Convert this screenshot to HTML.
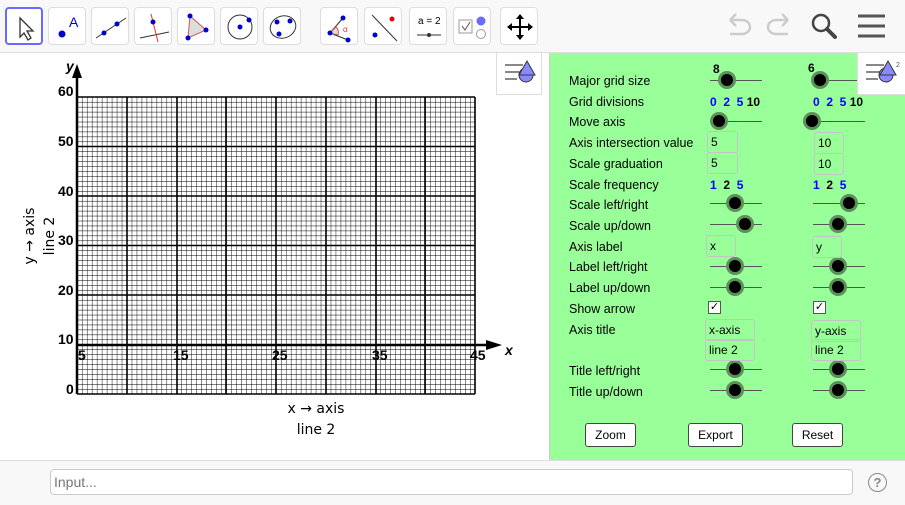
<!DOCTYPE html>
<html><head><style>
*{margin:0;padding:0;box-sizing:border-box}
body{width:905px;height:505px;overflow:hidden;background:#fff;font-family:"Liberation Sans",sans-serif;position:relative}
.tb{position:absolute;left:0;top:0;width:905px;height:53px;background:#f8f8f8;border-bottom:1px solid #ddd}
.btn{position:absolute;top:7px;width:38px;height:38px;background:#fff;border:1px solid #ddd;border-radius:4px}
.btn svg{width:38px;height:38px}
.panel{position:absolute;left:549px;top:53px;width:356px;height:407px;background:#99ff99;border-left:1px solid #ccc}
.l{position:absolute;left:19px;font-size:12.5px;color:#000}
.sl{position:absolute;height:1px;background:#555;width:52px}
.dot{position:absolute;width:18px;height:18px;border-radius:50%;background:#000;border:3px solid #5d8f5d}
.box{position:absolute;border:1.5px solid #c4c4c4;border-radius:3px;font-size:12px;padding:3px 0 0 3px;height:22px}
.cb{position:absolute;width:13px;height:13px;border:1px solid #555;background:#fff;font-size:11px;line-height:11px;text-align:center}
.b{position:absolute;top:370px;height:24px;border:1px solid #444;border-radius:3px;background:#fff;font-size:12px;text-align:center;line-height:22px}
.bottom{position:absolute;left:0;top:460px;width:905px;height:45px;background:#f8f8f8;border-top:1px solid #ddd}
</style></head><body>
<div class="tb">
<div class="btn" style="left:5px;border:2px solid #6a6aff"><svg viewBox="0 0 38 38"><path d="M13 9 L13 28 L17 24 L21 31 L24 29 L20 22 L26 22 Z" fill="#fff" stroke="#333" stroke-width="1.3"/></svg></div>
<div class="btn" style="left:48px"><svg viewBox="0 0 38 38"><circle cx="13" cy="26" r="3.5" fill="#00c"/><text x="20" y="19" fill="#00c" font-size="14" font-family="Liberation Sans">A</text></svg></div>
<div class="btn" style="left:91px"><svg viewBox="0 0 38 38"><line x1="4" y1="30" x2="34" y2="10" stroke="#333"/><circle cx="12" cy="25" r="2.5" fill="#00c"/><circle cx="25" cy="16" r="2.5" fill="#00c"/></svg></div>
<div class="btn" style="left:134px"><svg viewBox="0 0 38 38"><line x1="5" y1="30" x2="34" y2="24" stroke="#333"/><line x1="16" y1="6" x2="23" y2="34" stroke="#e33"/><circle cx="18" cy="14" r="2.5" fill="#00c"/></svg></div>
<div class="btn" style="left:177px"><svg viewBox="0 0 38 38"><path d="M12 8 L28 22 L10 30 Z" fill="#ddd" stroke="#c55"/><circle cx="12" cy="8" r="2.5" fill="#00c"/><circle cx="28" cy="22" r="2.5" fill="#00c"/><circle cx="10" cy="30" r="2.5" fill="#00c"/></svg></div>
<div class="btn" style="left:220px"><svg viewBox="0 0 38 38"><circle cx="19" cy="19" r="12" fill="none" stroke="#333"/><circle cx="19" cy="19" r="2.5" fill="#00c"/><circle cx="28" cy="12" r="2.5" fill="#00c"/></svg></div>
<div class="btn" style="left:263px"><svg viewBox="0 0 38 38"><ellipse cx="19" cy="19" rx="13" ry="11" fill="none" stroke="#333" transform="rotate(-20 19 19)"/><circle cx="13" cy="14" r="2.5" fill="#00c"/><circle cx="26" cy="13" r="2.5" fill="#00c"/><circle cx="15" cy="26" r="2.5" fill="#00c"/></svg></div>
<div class="btn" style="left:320px"><svg viewBox="0 0 38 38"><path d="M9 25 L22 10 M9 25 L27 32" stroke="#333"/><path d="M9 25 L15 19 A8 8 0 0 1 17 27 Z" fill="#ddd" stroke="#c55"/><text x="22" y="24" fill="#e33" font-size="8">α</text><circle cx="9" cy="25" r="2.5" fill="#00c"/><circle cx="22" cy="10" r="2.5" fill="#00c"/><circle cx="27" cy="32" r="2.5" fill="#00c"/></svg></div>
<div class="btn" style="left:364px"><svg viewBox="0 0 38 38"><line x1="7" y1="7" x2="32" y2="33" stroke="#333"/><circle cx="27" cy="11" r="2.5" fill="#e00"/><circle cx="10" cy="27" r="2.5" fill="#00c"/></svg></div>
<div class="btn" style="left:409px"><svg viewBox="0 0 38 38"><text x="8" y="16" font-size="10" fill="#000">a = 2</text><line x1="7" y1="27" x2="31" y2="27" stroke="#333"/><circle cx="19" cy="27" r="2" fill="#333"/></svg></div>
<div class="btn" style="left:453px"><svg viewBox="0 0 38 38"><rect x="5" y="12" width="13" height="13" fill="#fff" stroke="#999"/><path d="M8 18 L11 22 L16 14" fill="none" stroke="#555"/><circle cx="27" cy="13" r="4.5" fill="#6a6aff"/><circle cx="27" cy="26" r="4.5" fill="#fff" stroke="#999"/></svg></div>
<div class="btn" style="left:500px"><svg viewBox="0 0 38 38"><path d="M19 8 V30 M8 19 H30" stroke="#000" stroke-width="2"/><path d="M19 6 L15 11 H23Z M19 32 L15 27 H23Z M6 19 L11 15 V23Z M32 19 L27 15 V23Z" fill="#000"/></svg></div>
<svg style="position:absolute;left:722px;top:10px" width="180" height="34" viewBox="0 0 180 34"><path d="M8 10 H20 A8 7 0 0 1 20 24 H8 M8 10 L14 4 M8 10 L14 16" fill="none" stroke="#ccc" stroke-width="2.5"/><path d="M66 10 H54 A8 7 0 0 0 54 24 H66 M66 10 L60 4 M66 10 L60 16" fill="none" stroke="#ccc" stroke-width="2.5"/><circle cx="99" cy="13" r="8" fill="none" stroke="#444" stroke-width="2.5"/><path d="M105 19 L113 27" stroke="#444" stroke-width="4" stroke-linecap="round"/><path d="M136 6 H163 M136 16 H163 M136 26 H163" stroke="#555" stroke-width="3"/></svg>
</div>
<svg style="position:absolute;left:0;top:54px" width="548" height="406">
<defs>
<pattern id="f" patternUnits="userSpaceOnUse" x="77" y="43" width="4.975" height="4.95"><path d="M0 0 V4.95 M0 0 H4.975" stroke="#000" stroke-width="0.9" fill="none"/></pattern>
</defs>
<rect x="77" y="43" width="398" height="297" fill="url(#f)"/>
<g stroke="#000" stroke-width="1.6">
<path d="M77 43 H475 M77 92.5 H475 M77 142 H475 M77 191.5 H475 M77 241 H475 M77 340 H475"/>
<path d="M127 43 V340 M177 43 V340 M226 43 V340 M276 43 V340 M326 43 V340 M376 43 V340 M425 43 V340 M475 43 V340"/>
</g>
<path d="M77 340 V22" stroke="#000" stroke-width="2.5"/><path d="M77 10 L72 24 H82Z" fill="#000"/>
<path d="M77 291 H488" stroke="#000" stroke-width="2.5"/><path d="M502 291 L486 286 V296Z" fill="#000"/>
<g font-size="14" font-weight="bold" font-family="Liberation Sans">
<text x="58" y="42">60</text><text x="58" y="92">50</text><text x="58" y="142">40</text><text x="58" y="191">30</text><text x="58" y="241">20</text><text x="58" y="290">10</text><text x="66" y="340">0</text>
<text x="78" y="306">5</text><text x="173" y="306">15</text><text x="272" y="306">25</text><text x="372" y="306">35</text><text x="470" y="306">45</text>
<text x="66" y="17" font-style="italic">y</text><text x="505" y="301" font-style="italic">x</text>
</g>
<g font-size="14" font-family="DejaVu Sans" fill="#000">
<text x="316" y="359" text-anchor="middle">x → axis</text><text x="316" y="380" text-anchor="middle">line 2</text>
<text transform="translate(34 182) rotate(-90)" text-anchor="middle">y → axis</text><text transform="translate(54 182) rotate(-90)" text-anchor="middle">line 2</text>
</g>
</svg>
<div class="panel">
<div class="l" style="top:21px">Major grid size</div>
<div class="l" style="top:42px">Grid divisions</div>
<div class="l" style="top:62px">Move axis</div>
<div class="l" style="top:83px">Axis intersection value</div>
<div class="l" style="top:104px">Scale graduation</div>
<div class="l" style="top:125px">Scale frequency</div>
<div class="l" style="top:145px">Scale left/right</div>
<div class="l" style="top:166px">Scale up/down</div>
<div class="l" style="top:187px">Axis label</div>
<div class="l" style="top:207px">Label left/right</div>
<div class="l" style="top:228px">Label up/down</div>
<div class="l" style="top:249px">Show arrow</div>
<div class="l" style="top:270px">Axis title</div>
<div class="l" style="top:311px">Title left/right</div>
<div class="l" style="top:332px">Title up/down</div>
<div style="position:absolute;left:163px;top:9px;font-size:12px;font-weight:bold">8</div>
<div style="position:absolute;left:258px;top:8px;font-size:12px;font-weight:bold">6</div>
<div style="position:absolute;left:160px;top:42px;font-size:12px;font-weight:bold"><span style="color:#00f">0 &nbsp;2 &nbsp;5</span> 10</div>
<div style="position:absolute;left:263px;top:42px;font-size:12px;font-weight:bold"><span style="color:#00f">0 &nbsp;2 &nbsp;5</span> 10</div>
<div style="position:absolute;left:160px;top:125px;font-size:12px;font-weight:bold"><span style="color:#00f">1</span> &nbsp;2 &nbsp;<span style="color:#00f">5</span></div>
<div style="position:absolute;left:263px;top:125px;font-size:12px;font-weight:bold"><span style="color:#00f">1</span> &nbsp;2 &nbsp;<span style="color:#00f">5</span></div>
<div class="sl" style="left:160px;top:27px"></div><div class="dot" style="left:168px;top:18px"></div>
<div class="sl" style="left:160px;top:68px"></div><div class="dot" style="left:160px;top:59px"></div>
<div class="sl" style="left:160px;top:150px"></div><div class="dot" style="left:176px;top:141px"></div>
<div class="sl" style="left:160px;top:171px"></div><div class="dot" style="left:186px;top:162px"></div>
<div class="sl" style="left:160px;top:213px"></div><div class="dot" style="left:176px;top:204px"></div>
<div class="sl" style="left:160px;top:234px"></div><div class="dot" style="left:176px;top:225px"></div>
<div class="sl" style="left:160px;top:316px"></div><div class="dot" style="left:176px;top:307px"></div>
<div class="sl" style="left:160px;top:337px"></div><div class="dot" style="left:176px;top:328px"></div>
<div class="sl" style="left:263px;top:27px"></div><div class="dot" style="left:261px;top:18px"></div>
<div class="sl" style="left:263px;top:68px"></div><div class="dot" style="left:253px;top:59px"></div>
<div class="sl" style="left:263px;top:150px"></div><div class="dot" style="left:290px;top:141px"></div>
<div class="sl" style="left:263px;top:171px"></div><div class="dot" style="left:279px;top:162px"></div>
<div class="sl" style="left:263px;top:213px"></div><div class="dot" style="left:279px;top:204px"></div>
<div class="sl" style="left:263px;top:234px"></div><div class="dot" style="left:279px;top:225px"></div>
<div class="sl" style="left:263px;top:316px"></div><div class="dot" style="left:279px;top:307px"></div>
<div class="sl" style="left:263px;top:337px"></div><div class="dot" style="left:279px;top:328px"></div>
<div class="box" style="left:157px;top:78px;width:31px">5</div>
<div class="box" style="left:157px;top:99px;width:31px">5</div>
<div class="box" style="left:264px;top:79px;width:30px">10</div>
<div class="box" style="left:264px;top:100px;width:30px">10</div>
<div class="box" style="left:156px;top:182px;width:30px">x</div>
<div class="box" style="left:262px;top:183px;width:30px">y</div>
<div class="cb" style="left:158px;top:248px">✓</div>
<div class="cb" style="left:263px;top:248px">✓</div>
<div class="box" style="left:155px;top:266px;width:50px">x-axis</div>
<div class="box" style="left:155px;top:286px;width:50px">line 2</div>
<div class="box" style="left:261px;top:267px;width:50px">y-axis</div>
<div class="box" style="left:261px;top:286px;width:50px">line 2</div>
<div class="b" style="left:35px;width:51px">Zoom</div>
<div class="b" style="left:138px;width:55px">Export</div>
<div class="b" style="left:242px;width:51px">Reset</div>
</div>
<div style="position:absolute;left:496px;top:53px;width:46px;height:42px;background:#fff;border:1px solid #ddd;border-top:none"><svg width="46" height="42"><path d="M8 12 H26 M8 19 H22 M8 26 H20" stroke="#888" stroke-width="2"/><circle cx="29" cy="22" r="7" fill="#8a8aff" stroke="#333"/><path d="M30 8 L38 22 H22Z" fill="#8a8aff" stroke="#333"/></svg></div>
<div style="position:absolute;left:857px;top:53px;width:48px;height:42px;background:#fff;border-left:1px solid #ddd;border-bottom:1px solid #ddd"><svg width="48" height="42"><path d="M8 12 H26 M8 19 H22 M8 26 H20" stroke="#888" stroke-width="2"/><circle cx="28" cy="22" r="7" fill="#8a8aff" stroke="#333"/><path d="M30 8 L38 22 H22Z" fill="#8a8aff" stroke="#333"/><text x="38" y="14" font-size="7" fill="#555">2</text></svg></div>
<div class="bottom">
<div style="position:absolute;left:50px;top:8px;width:803px;height:26px;background:#fff;border:1px solid #ccc;border-radius:4px;font-size:14px;color:#777;padding:4px 3px">Input...</div>
<div style="position:absolute;left:868px;top:12px;width:19px;height:19px;border:1.5px solid #888;border-radius:50%;font-size:13px;color:#888;text-align:center;line-height:17px;font-weight:bold">?</div>
</div>
</body></html>
